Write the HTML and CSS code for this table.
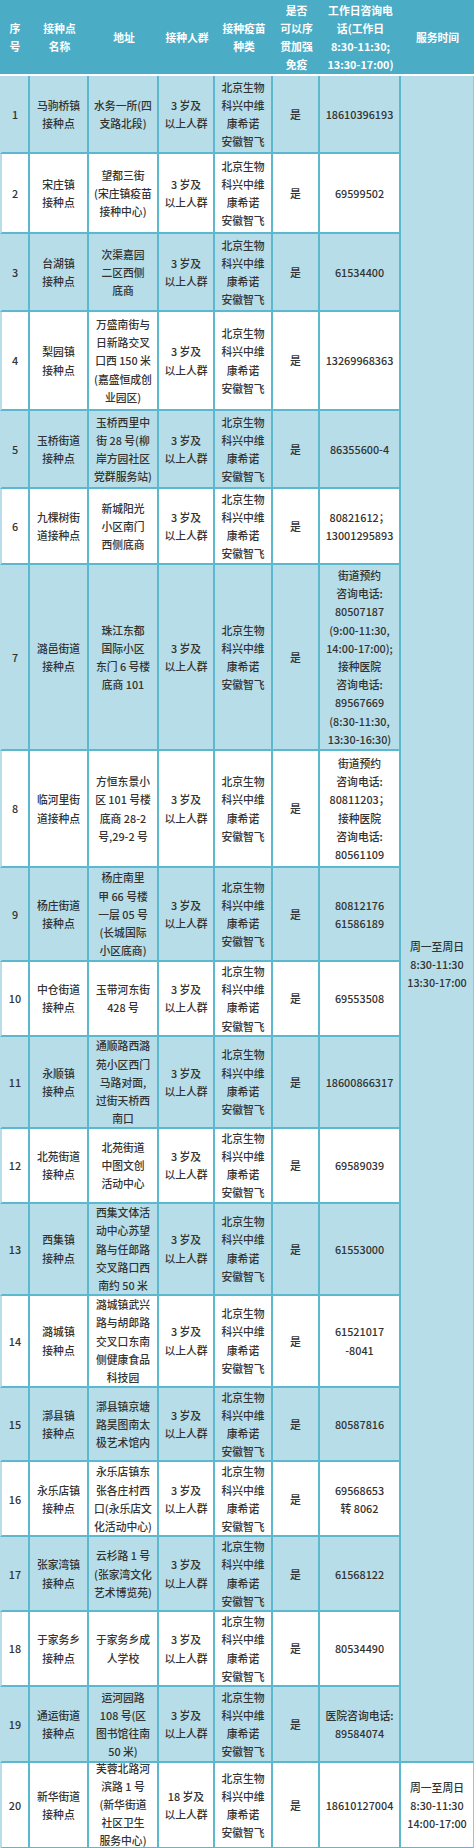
FILE: index.html
```html
<!DOCTYPE html>
<html lang="zh-CN">
<head>
<meta charset="utf-8">
<title>接种点信息</title>
<link rel="stylesheet" href="styles.css">
</head>
<body>
<table class="sched">
  <colgroup>
    <col class="c-no"><col class="c-name"><col class="c-addr"><col class="c-group">
    <col class="c-vac"><col class="c-boost"><col class="c-tel"><col class="c-time">
  </colgroup>
  <thead>
    <tr class="head">
      <th>序<br>号</th>
      <th>接种点<br>名称</th>
      <th>地址</th>
      <th>接种人群</th>
      <th>接种疫苗<br>种类</th>
      <th>是否<br>可以序<br>贯加强<br>免疫</th>
      <th>工作日咨询电<br>话(工作日<br>8:30-11:30;<br>13:30-17:00)</th>
      <th>服务时间</th>
    </tr>
  </thead>
  <tbody>
    <tr class="alt h78">
      <td>1</td><td>马驹桥镇<br>接种点</td><td>水务一所(四<br>支路北段)</td><td>3 岁及<br>以上人群</td>
      <td>北京生物<br>科兴中维<br>康希诺<br>安徽智飞</td><td>是</td><td>18610396193</td>
      <td class="service" rowspan="19">周一至周日<br>8:30-11:30<br>13:30-17:00</td>
    </tr>
    <tr class="h80">
      <td>2</td><td>宋庄镇<br>接种点</td><td>望都三街<br>(宋庄镇疫苗<br>接种中心)</td><td>3 岁及<br>以上人群</td>
      <td>北京生物<br>科兴中维<br>康希诺<br>安徽智飞</td><td>是</td><td>69599502</td>
    </tr>
    <tr class="alt h78">
      <td>3</td><td>台湖镇<br>接种点</td><td>次渠嘉园<br>二区西侧<br>底商</td><td>3 岁及<br>以上人群</td>
      <td>北京生物<br>科兴中维<br>康希诺<br>安徽智飞</td><td>是</td><td>61534400</td>
    </tr>
    <tr class="h99">
      <td>4</td><td>梨园镇<br>接种点</td><td>万盛南街与<br>日新路交叉<br>口西 150 米<br>(嘉盛恒成创<br>业园区)</td><td>3 岁及<br>以上人群</td>
      <td>北京生物<br>科兴中维<br>康希诺<br>安徽智飞</td><td>是</td><td>13269968363</td>
    </tr>
    <tr class="alt h78">
      <td>5</td><td>玉桥街道<br>接种点</td><td>玉桥西里中<br>街 28 号(柳<br>岸方园社区<br>党群服务站)</td><td>3 岁及<br>以上人群</td>
      <td>北京生物<br>科兴中维<br>康希诺<br>安徽智飞</td><td>是</td><td>86355600-4</td>
    </tr>
    <tr class="h76">
      <td>6</td><td>九棵树街<br>道接种点</td><td>新城阳光<br>小区南门<br>西侧底商</td><td>3 岁及<br>以上人群</td>
      <td>北京生物<br>科兴中维<br>康希诺<br>安徽智飞</td><td>是</td><td>80821612；<br>13001295893</td>
    </tr>
    <tr class="alt h186">
      <td>7</td><td>潞邑街道<br>接种点</td><td>珠江东都<br>国际小区<br>东门 6 号楼<br>底商 101</td><td>3 岁及<br>以上人群</td>
      <td>北京生物<br>科兴中维<br>康希诺<br>安徽智飞</td><td>是</td>
      <td>街道预约<br>咨询电话:<br>80507187<br>(9:00-11:30,<br>14:00-17:00);<br>接种医院<br>咨询电话:<br>89567669<br>(8:30-11:30,<br>13:30-16:30)</td>
    </tr>
    <tr class="h117">
      <td>8</td><td>临河里街<br>道接种点</td><td>方恒东景小<br>区 101 号楼<br>底商 28-2<br>号,29-2 号</td><td>3 岁及<br>以上人群</td>
      <td>北京生物<br>科兴中维<br>康希诺<br>安徽智飞</td><td>是</td>
      <td>街道预约<br>咨询电话:<br>80811203；<br>接种医院<br>咨询电话:<br>80561109</td>
    </tr>
    <tr class="alt h94">
      <td>9</td><td>杨庄街道<br>接种点</td><td>杨庄南里<br>甲 66 号楼<br>一层 05 号<br>(长城国际<br>小区底商)</td><td>3 岁及<br>以上人群</td>
      <td>北京生物<br>科兴中维<br>康希诺<br>安徽智飞</td><td>是</td><td>80812176<br>61586189</td>
    </tr>
    <tr class="h74">
      <td>10</td><td>中仓街道<br>接种点</td><td>玉带河东街<br>428 号</td><td>3 岁及<br>以上人群</td>
      <td>北京生物<br>科兴中维<br>康希诺<br>安徽智飞</td><td>是</td><td>69553508</td>
    </tr>
    <tr class="alt h92">
      <td>11</td><td>永顺镇<br>接种点</td><td><div class="fit">通顺路西潞<br>苑小区西门<br>马路对面,<br>过街天桥西<br>南口</div></td><td>3 岁及<br>以上人群</td>
      <td>北京生物<br>科兴中维<br>康希诺<br>安徽智飞</td><td>是</td><td>18600866317</td>
    </tr>
    <tr class="h74">
      <td>12</td><td>北苑街道<br>接种点</td><td>北苑街道<br>中图文创<br>活动中心</td><td>3 岁及<br>以上人群</td>
      <td>北京生物<br>科兴中维<br>康希诺<br>安徽智飞</td><td>是</td><td>69589039</td>
    </tr>
    <tr class="alt h92">
      <td>13</td><td>西集镇<br>接种点</td><td><div class="fit">西集文体活<br>动中心苏望<br>路与任郎路<br>交叉路口西<br>南约 50 米</div></td><td>3 岁及<br>以上人群</td>
      <td>北京生物<br>科兴中维<br>康希诺<br>安徽智飞</td><td>是</td><td>61553000</td>
    </tr>
    <tr class="h92">
      <td>14</td><td>潞城镇<br>接种点</td><td><div class="fit">潞城镇武兴<br>路与胡郎路<br>交叉口东南<br>侧健康食品<br>科技园</div></td><td>3 岁及<br>以上人群</td>
      <td>北京生物<br>科兴中维<br>康希诺<br>安徽智飞</td><td>是</td><td>61521017<br>-8041</td>
    </tr>
    <tr class="alt h74">
      <td>15</td><td>漷县镇<br>接种点</td><td>漷县镇京塘<br>路昊图南太<br>极艺术馆内</td><td>3 岁及<br>以上人群</td>
      <td>北京生物<br>科兴中维<br>康希诺<br>安徽智飞</td><td>是</td><td>80587816</td>
    </tr>
    <tr class="h74">
      <td>16</td><td>永乐店镇<br>接种点</td><td>永乐店镇东<br>张各庄村西<br>口(永乐店文<br>化活动中心)</td><td>3 岁及<br>以上人群</td>
      <td>北京生物<br>科兴中维<br>康希诺<br>安徽智飞</td><td>是</td><td>69568653<br>转 8062</td>
    </tr>
    <tr class="alt h74">
      <td>17</td><td>张家湾镇<br>接种点</td><td>云杉路 1 号<br>(张家湾文化<br>艺术博览苑)</td><td>3 岁及<br>以上人群</td>
      <td>北京生物<br>科兴中维<br>康希诺<br>安徽智飞</td><td>是</td><td>61568122</td>
    </tr>
    <tr class="h75">
      <td>18</td><td>于家务乡<br>接种点</td><td>于家务乡成<br>人学校</td><td>3 岁及<br>以上人群</td>
      <td>北京生物<br>科兴中维<br>康希诺<br>安徽智飞</td><td>是</td><td>80534490</td>
    </tr>
    <tr class="alt h76">
      <td>19</td><td>通运街道<br>接种点</td><td>运河园路<br>108 号(区<br>图书馆往南<br>50 米)</td><td>3 岁及<br>以上人群</td>
      <td>北京生物<br>科兴中维<br>康希诺<br>安徽智飞</td><td>是</td><td>医院咨询电话:<br>89584074</td>
    </tr>
    <tr class="h86">
      <td>20</td><td>新华街道<br>接种点</td><td><div class="fit-tight">芙蓉北路河<br>滨路 1 号<br>(新华街道<br>社区卫生<br>服务中心)</div></td><td>18 岁及<br>以上人群</td>
      <td>北京生物<br>科兴中维<br>康希诺<br>安徽智飞</td><td>是</td><td>18610127004</td>
      <td class="last">周一至周日<br>8:30-11:30<br>14:00-17:00</td>
    </tr>
  </tbody>
</table>
</body>
</html>
```

FILE: styles.css
```css
html, body {
  margin: 0;
  padding: 0;
  background: #b6dde8;
}

body {
  width: 474px;
  height: 1848px;
  overflow: hidden;
}

.sched {
  width: 474px;
  table-layout: fixed;
  border-collapse: separate;
  border-spacing: 0;
  font-family: "Noto Sans CJK SC", "Microsoft YaHei", sans-serif;
  font-size: 10.8px;
  font-weight: 500;
  line-height: 18.2px;
  color: #333333;
}

.c-no { width: 30px; }
.c-name { width: 59px; }
.c-addr { width: 70px; }
.c-group { width: 56px; }
.c-vac { width: 58px; }
.c-boost { width: 47px; }
.c-tel { width: 81px; }
.c-time { width: 73px; }

.sched th,
.sched td {
  padding: 0;
  text-align: center;
  vertical-align: middle;
  white-space: nowrap;
  box-sizing: border-box;
}

.sched th {
  background: #4bacc6;
  color: #ffffff;
  font-weight: 700;
  border-bottom: 2px solid #ffffff;
}

.head { height: 76px; }

.sched td {
  background: #ffffff;
  border-right: 2px solid #5cb8ce;
  border-bottom: 2px solid #5cb8ce;
}

.sched tr.alt td {
  background: #b6dde8;
}

.sched td:first-child {
  border-left: 2px solid #b6dde8;
}

.sched td.service {
  background: #b6dde8;
  border-right: 1px solid #8ccbdc;
  padding-top: 91px;
}

.sched td.last {
  border-right: 1px solid #8ccbdc;
}

/* content that slightly overflows its row, as in the source document */
.fit {
  margin: -1px 0;
}

.fit-tight {
  margin: -5px 0 -3px;
}

.h74 { height: 74px; }
.h75 { height: 75px; }
.h76 { height: 76px; }
.h78 { height: 78px; }
.h80 { height: 80px; }
.h86 { height: 86px; }
.h92 { height: 92px; }
.h94 { height: 94px; }
.h99 { height: 99px; }
.h117 { height: 117px; }
.h186 { height: 186px; }
```
